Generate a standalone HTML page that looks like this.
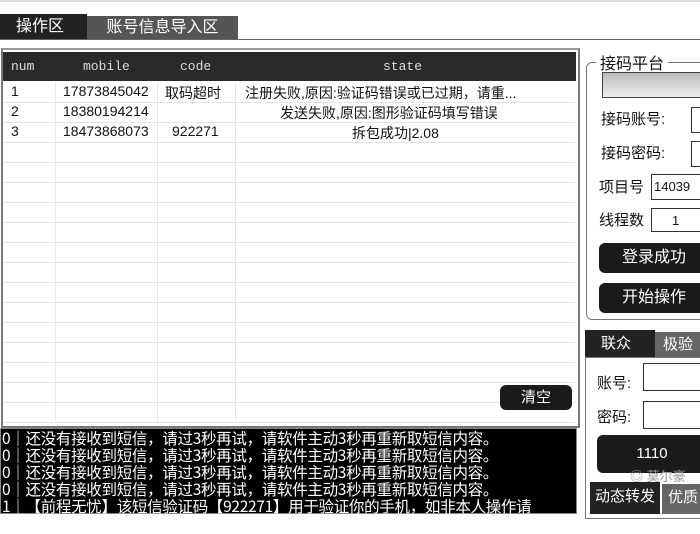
<html><head><style>
body{margin:0;width:700px;height:514px;background:#fff;position:relative;overflow:hidden;font-family:"Liberation Sans","Noto Sans CJK SC",sans-serif;color:#111}
.a{position:absolute}
.hd{font-family:"Liberation Mono",monospace;font-size:13px;color:#ddd;background:#2a2a2a}
.btn{background:#1a1a1a;color:#fff;border-radius:6px;text-align:center;font-size:15px}
.row{position:absolute;left:3px;width:572px;height:20px;border-bottom:1px solid #e4e4e4;font-size:14px}
.row span{position:absolute;top:1px}
.vl{position:absolute;top:82px;height:340px;width:1px;background:#e8e8e8}
.log{font-family:"Noto Sans CJK SC",monospace;font-size:15.5px;color:#fff;line-height:17px;white-space:nowrap;letter-spacing:-0.3px}
.inp{position:absolute;border:1px solid #333;background:#fff;font-size:13px}
.lb{position:absolute;font-size:15px}
</style></head><body>
<div class="a" style="left:0;top:0;width:700px;height:2px;background:#ddd"></div>
<div class="a" style="left:0;top:14px;width:87px;height:26px;background:#222;color:#fff;font-size:16px;line-height:26px;padding-left:16px;box-sizing:border-box">操作区</div>
<div class="a" style="left:87px;top:16px;width:151px;height:24px;background:#555;color:#fff;font-size:16px;line-height:24px;text-align:center">账号信息导入区</div>
<div class="a" style="left:0;top:39px;width:700px;height:1px;background:#666"></div>
<div class="a" style="left:1px;top:48px;width:575px;height:376px;border:2px solid #777;border-top-color:#999"></div>
<div class="a hd" style="left:3px;top:52px;width:573px;height:29px;line-height:29px">
<span class="a" style="left:8px">num</span><span class="a" style="left:80px">mobile</span><span class="a" style="left:177px">code</span><span class="a" style="left:380px">state</span></div>
<div class="vl" style="left:55px"></div><div class="vl" style="left:157px"></div><div class="vl" style="left:235px"></div>
<div class="row" style="top:82px"><span style="left:8px">1</span><span style="left:60px">17873845042</span><span style="left:162px">取码超时</span><span style="left:242px">注册失败,原因:验证码错误或已过期，请重...</span></div>
<div class="row" style="top:102px"><span style="left:8px">2</span><span style="left:60px">18380194214</span><span style="left:277px">发送失败,原因:图形验证码填写错误</span></div>
<div class="row" style="top:122px"><span style="left:8px">3</span><span style="left:60px">18473868073</span><span style="left:169px">922271</span><span style="left:349px">拆包成功|2.08</span></div>
<div class="row" style="top:142px"></div><div class="row" style="top:162px"></div><div class="row" style="top:182px"></div><div class="row" style="top:202px"></div><div class="row" style="top:222px"></div><div class="row" style="top:242px"></div><div class="row" style="top:262px"></div><div class="row" style="top:282px"></div><div class="row" style="top:302px"></div><div class="row" style="top:322px"></div><div class="row" style="top:342px"></div><div class="row" style="top:362px"></div><div class="row" style="top:382px"></div><div class="row" style="top:402px"></div>
<div class="a btn" style="left:500px;top:385px;width:72px;height:25px;line-height:25px">清空</div>
<div class="a" style="left:0;top:428px;width:577px;height:86px;background:#000;border:1px solid #888;box-sizing:border-box"></div>
<div class="a log" style="left:2px;top:430px">0│还没有接收到短信，请过3秒再试，请软件主动3秒再重新取短信内容。<br>0│还没有接收到短信，请过3秒再试，请软件主动3秒再重新取短信内容。<br>0│还没有接收到短信，请过3秒再试，请软件主动3秒再重新取短信内容。<br>0│还没有接收到短信，请过3秒再试，请软件主动3秒再重新取短信内容。<br>1│【前程无忧】该短信验证码【922271】用于验证你的手机，如非本人操作请<br>　泄露或删除短信</div>
<div class="a" style="left:586px;top:62px;width:120px;height:256px;border:1px solid #777;border-radius:6px"></div>
<div class="lb" style="left:596px;top:50px;background:#fff;padding:0 4px;font-size:16px">接码平台</div>
<div class="a" style="left:602px;top:72px;width:110px;height:24px;border:1px solid #444;background:linear-gradient(#bbb,#eee)"></div>
<div class="lb" style="left:601px;top:108px">接码账号:</div><div class="inp" style="left:691px;top:107px;width:20px;height:24px"></div>
<div class="lb" style="left:601px;top:142px">接码密码:</div><div class="inp" style="left:691px;top:141px;width:20px;height:24px"></div>
<div class="lb" style="left:599px;top:176px">项目号</div><div class="inp" style="left:651px;top:174px;width:55px;height:24px;line-height:24px;padding-left:2px">14039</div>
<div class="lb" style="left:599px;top:209px">线程数</div><div class="inp" style="left:651px;top:208px;width:55px;height:24px;line-height:24px;padding-left:20px;box-sizing:border-box">1</div>
<div class="a btn" style="left:599px;top:243px;width:110px;height:30px;line-height:30px;font-size:16px">登录成功</div>
<div class="a btn" style="left:599px;top:283px;width:110px;height:30px;line-height:30px;font-size:16px">开始操作</div>
<div class="a" style="left:585px;top:330px;width:70px;height:28px;background:#222;color:#fff;font-size:15px;line-height:28px;padding-left:16px;box-sizing:border-box">联众</div>
<div class="a" style="left:655px;top:332px;width:50px;height:26px;background:#666;color:#fff;font-size:15px;line-height:26px;padding-left:8px;box-sizing:border-box">极验</div>
<div class="a" style="left:585px;top:357px;width:120px;height:160px;border:1px solid #777"></div>
<div class="lb" style="left:597px;top:372px">账号:</div><div class="inp" style="left:643px;top:363px;width:60px;height:26px"></div>
<div class="lb" style="left:597px;top:406px">密码:</div><div class="inp" style="left:643px;top:401px;width:60px;height:26px"></div>
<div class="a btn" style="left:597px;top:435px;width:110px;height:38px;line-height:38px;font-size:15px">1110</div>
<div class="a" style="left:590px;top:482px;width:70px;height:32px;background:#222;color:#fff;font-size:15px;line-height:30px;text-align:center">动态转发</div>
<div class="a" style="left:662px;top:484px;width:40px;height:30px;background:#666;color:#fff;font-size:15px;line-height:28px;padding-left:6px;box-sizing:border-box">优质</div>
<div class="a" style="left:630px;top:466px;font-size:13px;color:#999">◎ 莫尔豪</div>
</body></html>
